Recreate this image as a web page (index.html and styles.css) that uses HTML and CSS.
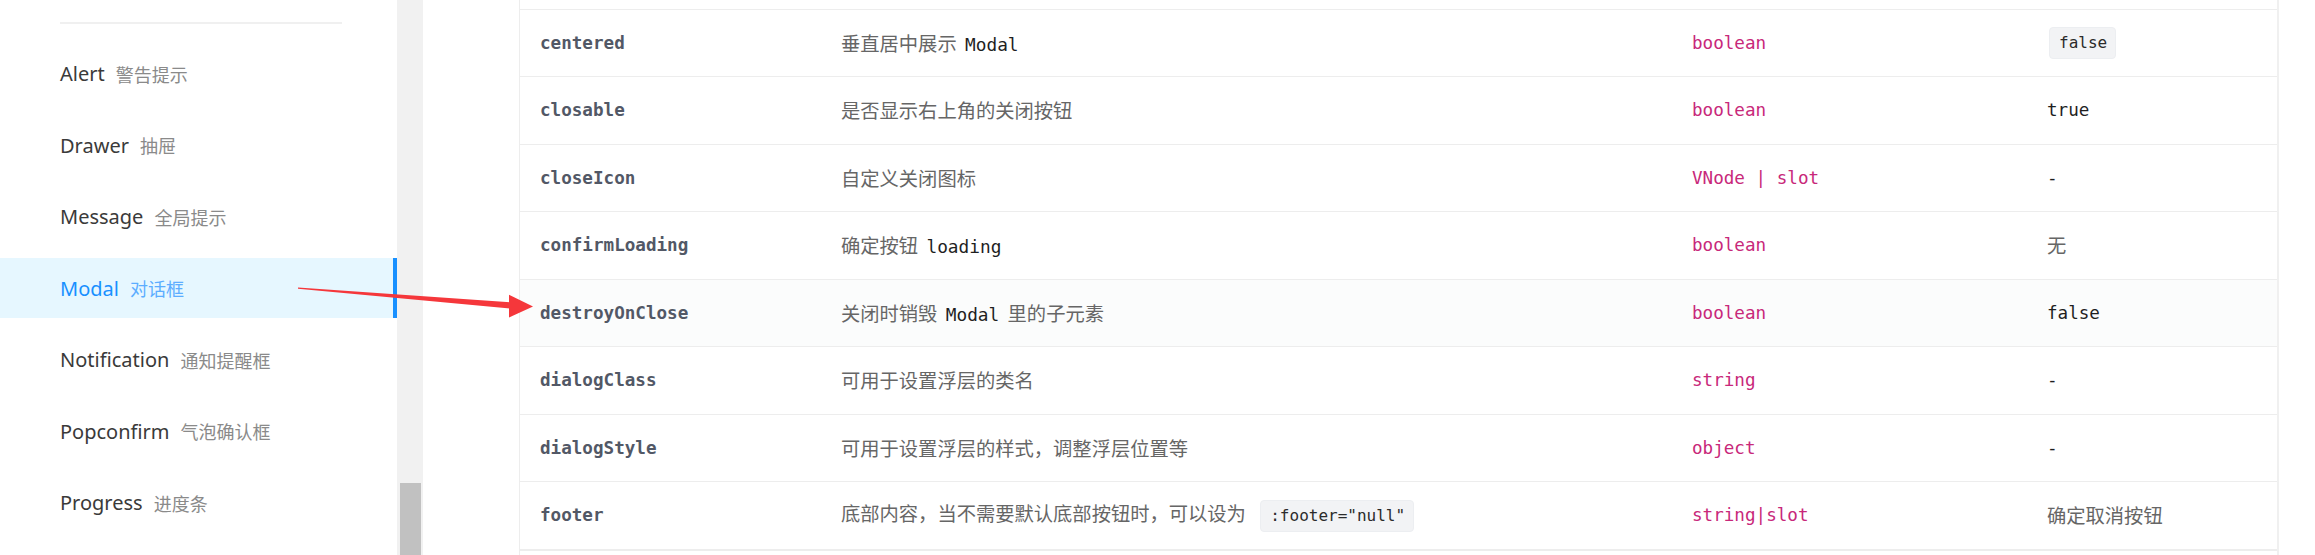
FILE: index.html
```html
<!DOCTYPE html>
<html lang="zh-CN">
<head>
<meta charset="utf-8">
<title>Modal 对话框 - API</title>
<link rel="stylesheet" href="styles.css">
</head>
<body>
<div class="page">
  <aside class="sider">
    <nav class="menu">
      <div class="divider"></div>
      <ul class="menu-list">
        <li class="menu-item">Alert<span class="sub">警告提示</span></li>
        <li class="menu-item">Drawer<span class="sub">抽屉</span></li>
        <li class="menu-item">Message<span class="sub">全局提示</span></li>
        <li class="menu-item active">Modal<span class="sub">对话框</span></li>
        <li class="menu-item">Notification<span class="sub">通知提醒框</span></li>
        <li class="menu-item">Popconfirm<span class="sub">气泡确认框</span></li>
        <li class="menu-item">Progress<span class="sub">进度条</span></li>
      </ul>
    </nav>
    <div class="scrollbar"><div class="thumb"></div></div>
  </aside>
  <main class="main">
    <table class="api">
      <colgroup>
        <col class="c-name"><col class="c-desc"><col class="c-type"><col class="c-def">
      </colgroup>
      <tbody>
        <tr class="edge-top"><td></td><td></td><td></td><td></td></tr>
        <tr>
          <td class="name">centered</td>
          <td class="desc">垂直居中展示 <code class="plain">Modal</code></td>
          <td class="type">boolean</td>
          <td class="def"><code class="tag">false</code></td>
        </tr>
        <tr>
          <td class="name">closable</td>
          <td class="desc">是否显示右上角的关闭按钮</td>
          <td class="type">boolean</td>
          <td class="def mono">true</td>
        </tr>
        <tr>
          <td class="name">closeIcon</td>
          <td class="desc">自定义关闭图标</td>
          <td class="type">VNode | slot</td>
          <td class="def mono">-</td>
        </tr>
        <tr>
          <td class="name">confirmLoading</td>
          <td class="desc">确定按钮 <code class="plain">loading</code></td>
          <td class="type">boolean</td>
          <td class="def zh">无</td>
        </tr>
        <tr class="hover">
          <td class="name">destroyOnClose</td>
          <td class="desc">关闭时销毁 <code class="plain">Modal</code> 里的子元素</td>
          <td class="type">boolean</td>
          <td class="def mono">false</td>
        </tr>
        <tr>
          <td class="name">dialogClass</td>
          <td class="desc">可用于设置浮层的类名</td>
          <td class="type">string</td>
          <td class="def mono">-</td>
        </tr>
        <tr>
          <td class="name">dialogStyle</td>
          <td class="desc">可用于设置浮层的样式，调整浮层位置等</td>
          <td class="type">object</td>
          <td class="def mono">-</td>
        </tr>
        <tr>
          <td class="name">footer</td>
          <td class="desc">底部内容，当不需要默认底部按钮时，可以设为 <code class="tag">:footer="null"</code></td>
          <td class="type">string|slot</td>
          <td class="def zh">确定取消按钮</td>
        </tr>
        <tr class="edge-bottom"><td></td><td></td><td></td><td></td></tr>
      </tbody>
    </table>
  </main>
  <svg class="annotation" width="2315" height="555" viewBox="0 0 2315 555" aria-hidden="true">
    <polygon points="298,287.4 511,302.2 511,308.6 298,288.8" fill="#f5373b"/>
    <polygon points="509,294.8 533,306.5 509,317.6" fill="#f5373b"/>
  </svg>
</div>
</body>
</html>
```

FILE: styles.css
```css
* {
  box-sizing: border-box;
}

html, body {
  margin: 0;
  padding: 0;
  background: #ffffff;
}

body {
  width: 2315px;
  height: 555px;
  overflow: hidden;
  font-family: "Noto Sans", "Noto Sans CJK SC", sans-serif;
}

.page {
  position: relative;
  display: flex;
  width: 2315px;
  height: 555px;
  overflow: hidden;
}

/* ---------- sidebar ---------- */
.sider {
  display: flex;
  flex: 0 0 423px;
  height: 555px;
}

.menu {
  flex: 0 0 397px;
  background: #ffffff;
  padding-top: 22px;
}

.divider {
  height: 2px;
  margin: 0 55px 0 60px;
  background: #f0f0f0;
}

.menu-list {
  list-style: none;
  margin: 19.5px 0 0;
  padding: 0;
  display: flex;
  flex-direction: column;
  gap: 11.5px;
}

.menu-item {
  height: 60px;
  display: flex;
  align-items: center;
  padding-left: 60px;
  font-size: 20px;
  color: #3a3a3a;
  border-right: 3px solid transparent;
  white-space: nowrap;
}

.menu-item .sub {
  margin-left: 11px;
  font-family: "Noto Sans CJK SC", sans-serif;
  font-size: 18px;
  color: #8a8a8a;
}

.menu-item.active {
  background: #e6f7ff;
  color: #1890ff;
  border-right: 4px solid #1890ff;
}

.menu-item.active .sub {
  color: #5cadff;
}

.scrollbar {
  flex: 0 0 26px;
  background: #f1f1f1;
  padding: 483px 2px 0 3px;
}

.thumb {
  height: 100px;
  background: #c1c1c1;
}

/* ---------- main ---------- */
.main {
  flex: 1;
  padding-left: 96px;
}

.api {
  width: 1760px;
  border-collapse: separate;
  border-spacing: 0;
  table-layout: fixed;
  border-left: 1px solid #ededed;
  border-right: 2px solid #f0f0f0;
}

.c-name { width: 301px; }
.c-desc { width: 851px; }
.c-type { width: 355px; }
.c-def  { width: 250px; }

.api td {
  height: 67.5px;
  padding: 0 0 0 20px;
  border-top: 1px solid #ededed;
  vertical-align: middle;
  white-space: nowrap;
}

.api tr.edge-top td {
  height: 8.5px;
  border-top: 0;
}

.api tr.edge-bottom td {
  height: 20px;
  border-top-width: 2px;
}

.api tr.hover td {
  background: #fbfcfc;
}

.name {
  font-family: "DejaVu Sans Mono", monospace;
  font-weight: bold;
  font-size: 17.6px;
  color: #525866;
}

.desc {
  font-family: "Noto Sans CJK SC", sans-serif;
  font-size: 19.3px;
  color: #666666;
}

.type {
  font-family: "DejaVu Sans Mono", monospace;
  font-size: 17.6px;
  color: #c8287a;
}

.def {
  font-size: 17.6px;
  color: #1f1f1f;
}

.mono {
  font-family: "DejaVu Sans Mono", monospace;
}

.def.zh {
  font-family: "Noto Sans CJK SC", sans-serif;
  font-size: 19.3px;
  color: #666666;
}

code.plain {
  font-family: "DejaVu Sans Mono", monospace;
  font-size: 17.8px;
  color: #1f1f1f;
  margin: 0 4px;
}

code.tag {
  display: inline-block;
  height: 32px;
  line-height: 30px;
  padding: 0 8px 0 9px;
  font-family: "DejaVu Sans Mono", monospace;
  font-size: 16px;
  color: #2b2b2b;
  background: #f2f3f5;
  border: 1px solid #eceef1;
  border-radius: 4px;
  vertical-align: middle;
}

.def code.tag {
  margin-left: 2px;
}

.desc code.tag {
  margin-left: 10px;
}

/* ---------- annotation overlay ---------- */
.annotation {
  position: absolute;
  left: 0;
  top: 0;
  pointer-events: none;
}
```
